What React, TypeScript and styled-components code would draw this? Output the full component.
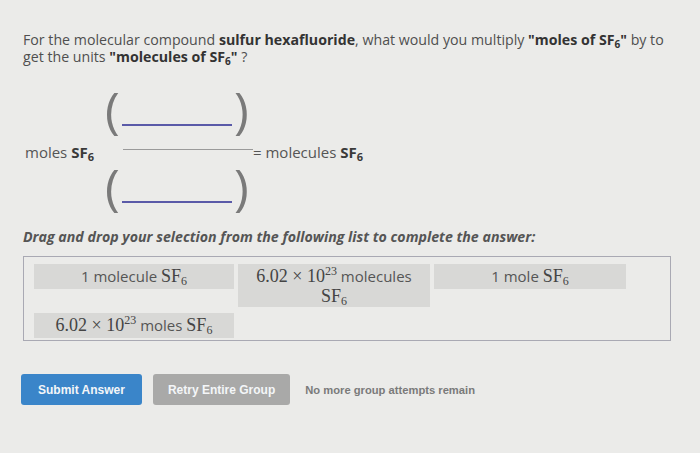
import React from "react";
import styled, { createGlobalStyle } from "styled-components";

const Global = createGlobalStyle`
  html, body { margin: 0; padding: 0; background: #ebebe9; }
  body { font-family: "Open Sans", "Liberation Sans", sans-serif; color: #4d4d4d; }
`;

const Page = styled.div`
  width: 700px;
  height: 453px;
  box-sizing: border-box;
  padding: 31px 0 0 23px;
  background: #ebebe9;
  overflow: hidden;
`;

const Question = styled.p`
  margin: 0;
  width: 664px;
  font-size: 14.2px;
  line-height: 17px;
  color: #4f4f4f;
  b { color: #333; font-weight: 700; }
  sub { font-size: 10px; line-height: 0; vertical-align: -3px; }
`;

const Equation = styled.div`
  display: flex;
  align-items: center;
  margin-top: 24px;
  margin-left: 2px;
  font-size: 15px;
  color: #555;
  b { color: #3a3a3a; font-weight: 700; }
  sub { font-size: 11px; line-height: 0; vertical-align: -3px; font-weight: 700; color: #3a3a3a; }
`;

const Label = styled.span`
  width: 80px;
  white-space: nowrap;
  padding-top: 8px;
`;

const Fraction = styled.div`
  display: flex;
  flex-direction: column;
  width: 148px;
`;

const Slot = styled.div`
  display: flex;
  align-items: flex-start;
  height: 41px;
`;

const Paren = styled.span`
  font-family: "Open Sans", sans-serif;
  font-weight: 400;
  font-size: 50px;
  line-height: 41px;
  color: #7a7a7a;
  width: 15px;
`;

const Blank = styled.span`
  width: 110px;
  height: 35px;
  margin: 0 2px 0 2px;
  border-bottom: 2px solid #5a5aa8;
`;

const Bar = styled.div`
  margin: 19px 0 16px 18px;
  height: 1px;
  background: #9a9a9a;
`;

const Result = styled.span`
  white-space: nowrap;
  padding-top: 8px;
`;

const Prompt = styled.p`
  margin: 20px 0 0 0;
  font-size: 14.2px;
  font-weight: 700;
  font-style: italic;
  color: #555;
`;

const Pool = styled.div`
  margin-top: 10px;
  width: 648px;
  box-sizing: border-box;
  border: 1px solid #a9a9b3;
  padding: 7px 10px 2px 10px;
  display: flex;
  flex-wrap: wrap;
  align-items: flex-start;
  column-gap: 4px;
  row-gap: 6px;
`;

const Chip = styled.div<{ $w?: number }>`
  width: ${(p) => p.$w ?? 196}px;
  box-sizing: border-box;
  min-height: 25px;
  padding: 2px 8px 1px;
  background: #d8d8d6;
  text-align: center;
  font-size: 15px;
  line-height: 20px;
  color: #555;
`;

const M = styled.span`
  font-family: "Liberation Serif", "DejaVu Serif", serif;
  font-size: 18px;
  color: #444;
  sub { font-size: 12px; line-height: 0; vertical-align: -3px; }
  sup { font-size: 12px; line-height: 0; vertical-align: 7px; }
`;

const Actions = styled.div`
  display: flex;
  align-items: center;
  margin-top: 33px;
  margin-left: -2px;
`;

const Button = styled.button<{ $tone: "primary" | "muted" }>`
  height: 31px;
  border: none;
  border-radius: 3px;
  padding: 0 ${(p) => (p.$tone === "primary" ? 17 : 15)}px;
  margin-right: 11px;
  background: ${(p) => (p.$tone === "primary" ? "#3a85c9" : "#a9a9a8")};
  color: #f4f6f8;
  font-family: "Liberation Sans", Arial, sans-serif;
  font-weight: 700;
  font-size: 12px;
  cursor: pointer;
`;

const Note = styled.span`
  margin-left: 4px;
  font-family: "Liberation Sans", Arial, sans-serif;
  font-weight: 700;
  font-size: 11.2px;
  color: #7a7a7a;
`;

const SF6 = () => (
  <M>
    SF<sub>6</sub>
  </M>
);

export default function App() {
  return (
    <Page>
      <Global />
      <Question>
        For the molecular compound <b>sulfur hexafluoride</b>, what would you multiply{" "}
        <b>
          "moles of SF<sub>6</sub>"
        </b>{" "}
        by to get the units{" "}
        <b>
          "molecules of SF<sub>6</sub>"
        </b>{" "}
        ?
      </Question>

      <Equation>
        <Label>
          moles <b>SF</b>
          <sub>6</sub>
        </Label>
        <Fraction>
          <Slot>
            <Paren>(</Paren>
            <Blank />
            <Paren>)</Paren>
          </Slot>
          <Bar />
          <Slot>
            <Paren>(</Paren>
            <Blank />
            <Paren>)</Paren>
          </Slot>
        </Fraction>
        <Result>
          = molecules <b>SF</b>
          <sub>6</sub>
        </Result>
      </Equation>

      <Prompt>Drag and drop your selection from the following list to complete the answer:</Prompt>

      <Pool>
        <Chip $w={200}>
          1 molecule <SF6 />
        </Chip>
        <Chip $w={192}>
          <M>
            6.02 × 10<sup>23</sup>
          </M>{" "}
          molecules <SF6 />
        </Chip>
        <Chip $w={192}>
          1 mole <SF6 />
        </Chip>
        <Chip $w={200}>
          <M>
            6.02 × 10<sup>23</sup>
          </M>{" "}
          moles <SF6 />
        </Chip>
      </Pool>

      <Actions>
        <Button $tone="primary">Submit Answer</Button>
        <Button $tone="muted">Retry Entire Group</Button>
        <Note>No more group attempts remain</Note>
      </Actions>
    </Page>
  );
}
